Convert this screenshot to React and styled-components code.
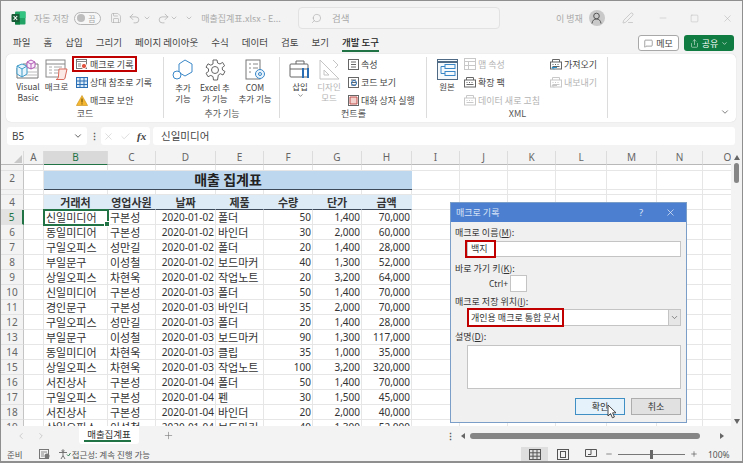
import React from 'react';
import styled, { createGlobalStyle } from 'styled-components';
import {
  Search, Undo2, Redo2, Save, PenLine, Minus, Square, X, MessageSquare, ChevronDown,
  ChevronLeft, ChevronRight, Plus, Check, Share,
} from 'lucide-react';

const KR = `"Noto Sans CJK KR", "Noto Sans", sans-serif`;
const LATIN = `"Noto Sans", "Noto Sans CJK KR", sans-serif`;

const GlobalStyle = createGlobalStyle`
  html, body { margin: 0; padding: 0; height: 100%; overflow: hidden; background: #f3f3f3; }
  #root { height: 100%; }
  * { box-sizing: border-box; }
`;

const Window = styled.div`
  width: 743px;
  height: 463px;
  position: relative;
  display: flex;
  flex-direction: column;
  background: #f3f3f3;
  border: 1px solid #8f8f8f;
  border-bottom-width: 2px;
  font-family: ${KR};
  color: #333;
  overflow: hidden;
`;

/* title bar */
const TitleBar = styled.div`
  height: 34px;
  display: flex;
  align-items: center;
  padding: 0 0 0 10px;
  color: #a9a9a9;
  font-size: 9px;
  flex: none;
`;
const Faint = styled.span`
  margin-left: ${(p) => p.$ml || 0}px;
  display: inline-flex;
  align-items: center;
  color: ${(p) => p.$color || '#aaa'};
  white-space: nowrap;
`;
const Toggle = styled.div`
  margin-left: 5px;
  width: 27px;
  height: 13px;
  border: 1px solid #b5b5b5;
  border-radius: 7px;
  display: flex;
  align-items: center;
  padding-left: 2px;
  gap: 3px;
  font-size: 8px;
  background: #f7f7f7;
  &::before {
    content: '';
    width: 8px;
    height: 8px;
    border-radius: 50%;
    background: #bdbdbd;
  }
`;
const SearchBox = styled.div`
  position: absolute;
  left: 297px;
  top: 6px;
  width: 202px;
  height: 22px;
  border: 1px solid #e2e2e2;
  border-radius: 4px;
  background: #f5f5f5;
  display: flex;
  align-items: center;
  padding-left: 12px;
  gap: 10px;
  font-size: 9.5px;
`;
const TitleRight = styled.div`
  margin-left: auto;
  display: flex;
  align-items: center;
  width: 186px;
`;
const Avatar = styled.div`
  width: 16px;
  height: 16px;
  border-radius: 50%;
  background: #c9c9c9;
  margin-left: 6px;
  display: flex;
  align-items: center;
  justify-content: center;
`;

/* tabs */
const TabRow = styled.div`
  height: 19px;
  flex: none;
  display: flex;
  align-items: flex-start;
  padding-left: 12px;
  gap: 13px;
  font-size: 9.5px;
  position: relative;
`;
const Tab = styled.div`
  height: 17px;
  line-height: 14px;
  color: ${(p) => (p.$active ? '#222' : '#444')};
  font-weight: ${(p) => (p.$active ? 500 : 400)};
  border-bottom: ${(p) => (p.$active ? '2px solid #217346' : '2px solid transparent')};
  white-space: nowrap;
`;
const TabActions = styled.div`
  position: absolute;
  right: 8px;
  top: 0;
  display: flex;
  gap: 5px;
`;
const MemoButton = styled.div`
  width: 41px;
  height: 16px;
  border: 1px solid #a8a8a8;
  border-radius: 3px;
  background: #fff;
  display: flex;
  align-items: center;
  justify-content: center;
  gap: 3px;
  font-size: 9px;
  color: #444;
`;
const ShareButton = styled.div`
  width: 50px;
  height: 16px;
  background: #107c41;
  border-radius: 3px;
  color: #fff;
  display: flex;
  align-items: center;
  justify-content: center;
  gap: 3px;
  font-size: 9px;
`;

/* ribbon */
const Ribbon = styled.div`
  flex: none;
  height: 68px;
  margin: 0 6px 0 5px;
  background: #fff;
  border-radius: 5px;
  box-shadow: 0 0 1px rgba(0, 0, 0, 0.2);
  display: flex;
  position: relative;
`;
const Group = styled.div`
  width: ${(p) => p.$w}px;
  display: flex;
  flex-direction: column;
  position: relative;
  &::after {
    content: '';
    position: absolute;
    right: 0;
    top: 3px;
    bottom: 4px;
    width: 1px;
    background: #dcdcdc;
  }
`;
const GroupBody = styled.div`
  flex: 1;
  min-height: 0;
  display: flex;
  align-items: flex-start;
  padding-left: ${(p) => p.$pl || 0}px;
`;
const GroupLabel = styled.div`
  flex: none;
  height: 15px;
  text-align: center;
  font-size: 9px;
  line-height: 14px;
  color: #555;
`;
const BigButton = styled.div`
  width: ${(p) => p.$w || 30}px;
  margin-left: ${(p) => p.$ml || 0}px;
  display: flex;
  flex-direction: column;
  align-items: center;
  padding-top: 5px;
  font-size: 8.5px;
  line-height: 11px;
  text-align: center;
  white-space: nowrap;
  color: ${(p) => (p.$off ? '#b4b4b4' : '#444')};
  svg { margin-bottom: 1px; flex: none; }
`;
const SmallColumn = styled.div`
  display: flex;
  flex-direction: column;
  align-items: flex-start;
  gap: 2px;
  padding-top: 2px;
  margin-left: ${(p) => p.$ml || 0}px;
  width: ${(p) => p.$w || 'auto'};
`;
const SmallButton = styled.div`
  height: 16px;
  display: flex;
  align-items: center;
  gap: 2px;
  padding: 0 2px 0 2px;
  font-size: 9px;
  white-space: nowrap;
  color: ${(p) => (p.$off ? '#b4b4b4' : '#444')};
  border: ${(p) => (p.$marked ? '2px solid #c00000' : '2px solid transparent')};
  svg { flex: none; }
`;
const CollapseRibbon = styled.div`
  position: absolute;
  right: 6px;
  bottom: 5px;
  color: #666;
  display: flex;
`;

/* formula bar */
const FormulaBar = styled.div`
  flex: none;
  height: 29px;
  display: flex;
  align-items: flex-start;
  padding: 5px 7px 0 6px;
  font-size: 10.5px;
`;
const NameBox = styled.div`
  width: 80px;
  height: 18px;
  background: #fff;
  border-radius: 3px;
  display: flex;
  align-items: center;
  justify-content: space-between;
  padding: 0 4px 0 5px;
  color: #444;
  font-family: ${LATIN};
  font-size: 10px;
`;
const Dots = styled.div`
  width: 14px;
  height: 18px;
  display: flex;
  align-items: center;
  justify-content: center;
  color: #555;
  font-weight: 700;
  font-size: 9px;
`;
const FxBox = styled.div`
  width: 49px;
  height: 18px;
  background: #fff;
  border-radius: 3px;
  display: flex;
  align-items: center;
  gap: 6px;
  padding-left: 2px;
  color: #c4c4c4;
`;
const FxMark = styled.span`
  font-family: "Liberation Serif", serif;
  font-style: italic;
  font-weight: 700;
  font-size: 11px;
  color: #444;
`;
const FormulaInput = styled.div`
  flex: 1;
  height: 18px;
  margin-left: 3px;
  padding-left: 8px;
  background: #fff;
  border-radius: 3px;
  line-height: 17px;
  color: #444;
`;

/* sheet */
const SheetArea = styled.div`
  flex: none;
  height: 275px;
  display: flex;
  background: #fff;
  overflow: hidden;
`;
const Sheet = styled.div`
  width: 730px;
  overflow: hidden;
  display: grid;
  grid-template-columns: 23px 20px 64px 48px 60px 48px 49px 49px 50px 48px 48px 48px 51px 50px 46px 50px;
  grid-template-rows: 14px 6px 19px 5px 15px repeat(15, 15px);
  grid-auto-rows: 15px;
  align-content: start;
`;
const ColHead = styled.div`
  background: ${(p) => (p.$sel ? '#d9d9d9' : '#f3f3f3')};
  color: ${(p) => (p.$sel ? '#217346' : '#666')};
  border-right: 1px solid #dcdcdc;
  border-bottom: ${(p) => (p.$sel ? '1px solid #217346' : '1px solid #b8b8b8')};
  text-align: center;
  font-family: ${LATIN};
  font-size: 10px;
  line-height: 13px;
`;
const Corner = styled(ColHead)`
  position: relative;
  &::after {
    content: '';
    position: absolute;
    right: 1px;
    bottom: 1px;
    border: 4px solid transparent;
    border-right-color: #c8c8c8;
    border-bottom-color: #c8c8c8;
  }
`;
const RowHead = styled.div`
  background: ${(p) => (p.$sel ? '#e2e2e2' : '#f3f3f3')};
  color: ${(p) => (p.$sel ? '#217346' : '#666')};
  border-right: ${(p) => (p.$sel ? '2px solid #217346' : '1px solid #c4c4c4')};
  border-bottom: 1px solid #e2e2e2;
  text-align: center;
  font-family: ${LATIN};
  font-size: 10px;
  line-height: 14px;
  overflow: hidden;
`;
const Cell = styled.div`
  position: relative;
  padding: ${(p) => (p.$align === 'right' ? '0 1px 0 2px' : '0 2px')};
  border-right: 1px solid ${(p) => p.$line || '#e6e6e6'};
  border-bottom: 1px solid ${(p) => p.$under || '#e6e6e6'};
  background: ${(p) => p.$fill || '#fff'};
  font-family: ${(p) => (p.$latin ? LATIN : KR)};
  font-size: ${(p) => (p.$latin ? '10px' : '11px')};
  font-weight: ${(p) => (p.$bold ? 700 : 400)};
  text-align: ${(p) => p.$align || 'left'};
  line-height: 14px;
  color: #333;
  white-space: nowrap;
  overflow: hidden;
`;
const SelectedCell = styled(Cell)`
  overflow: visible;
  outline: 2px solid #217346;
  outline-offset: -1px;
  z-index: 1;
  &::after {
    content: '';
    position: absolute;
    right: -3px;
    bottom: -3px;
    width: 4px;
    height: 4px;
    background: #217346;
    border: 1px solid #fff;
  }
`;
const TitleCell = styled.div`
  grid-column: 3 / span 7;
  background: #bdd7ee;
  border-bottom: 1px solid #3d4a5a;
  text-align: center;
  font-weight: 700;
  font-size: 14px;
  line-height: 17px;
  color: #222;
`;
const VScroll = styled.div`
  flex: 1;
  background: #f3f3f3;
  display: flex;
  flex-direction: column;
  align-items: center;
  padding-top: 4px;
  position: relative;
  &::before {
    content: '';
    border: 3px solid transparent;
    border-top: 0;
    border-bottom: 5px solid #666;
  }
`;
const VThumb = styled.div`
  width: 5px;
  height: 20px;
  border-radius: 3px;
  background: #868686;
  margin-top: 3px;
`;
const VDown = styled.div`
  margin-top: auto;
  margin-bottom: 2px;
  border: 3px solid transparent;
  border-bottom: 0;
  border-top: 5px solid #666;
`;

/* sheet tabs */
const SheetTabs = styled.div`
  flex: none;
  height: 21px;
  display: flex;
  align-items: flex-start;
  color: #b0b0b0;
`;
const TabNav = styled.div`
  width: 78px;
  height: 19px;
  display: flex;
  align-items: center;
  gap: 10px;
  padding-left: 15px;
`;
const SheetTab = styled.div`
  width: 60px;
  height: 18px;
  background: #fff;
  border-radius: 0 0 3px 3px;
  text-align: center;
  font-size: 9.5px;
  line-height: 17px;
  color: #333;
  position: relative;
  &::after {
    content: '';
    position: absolute;
    left: 5px;
    right: 8px;
    bottom: 2px;
    height: 2px;
    background: #217346;
  }
`;
const AddSheet = styled.div`
  margin-left: 24px;
  height: 19px;
  display: flex;
  align-items: center;
  color: #777;
`;
const HScroll = styled.div`
  margin-left: auto;
  width: 296px;
  height: 20px;
  display: flex;
  align-items: center;
  padding-right: 18px;
  color: #666;
`;
const Kebab = styled.span`
  width: 15px;
  font-weight: 700;
  font-size: 9px;
  color: #555;
`;
const HArrow = styled.span`
  border: 3px solid transparent;
  border-left: ${(p) => (p.$dir === 'r' ? '4px solid #666' : 0)};
  border-right: ${(p) => (p.$dir === 'l' ? '4px solid #666' : 0)};
`;
const HThumb = styled.div`
  flex: 1;
  height: 6px;
  border-radius: 3px;
  background: #868686;
  margin: 0 20px 0 5px;
`;

/* status bar */
const StatusBar = styled.div`
  flex: 1;
  display: flex;
  align-items: center;
  padding-left: 6px;
  font-size: 8.5px;
  color: #555;
`;
const StatusRight = styled.div`
  margin-left: auto;
  display: flex;
  align-items: center;
  height: 100%;
  color: #555;
`;
const ViewButton = styled.div`
  width: 27px;
  height: 100%;
  display: flex;
  align-items: center;
  justify-content: center;
  margin-right: 1px;
  background: ${(p) => (p.$on ? '#dedede' : 'transparent')};
`;
const Zoomer = styled.div`
  width: 67px;
  height: 1px;
  background: #777;
  margin: 0 5px;
  position: relative;
  &::after {
    content: '';
    position: absolute;
    left: 32px;
    top: -4px;
    width: 3px;
    height: 9px;
    background: #666;
  }
`;
const ZoomValue = styled.span`
  width: 34px;
  margin-left: 10px;
  font-family: ${LATIN};
  font-size: 8.5px;
`;

/* macro dialog */
const Dialog = styled.div`
  position: absolute;
  left: 449px;
  top: 201px;
  width: 237px;
  height: 221px;
  background: #f0f0f0;
  border: 1px solid #7b9ec9;
  z-index: 5;
  display: flex;
  flex-direction: column;
  font-size: 9px;
  color: #333;
`;
const DialogTitle = styled.div`
  height: 19px;
  flex: none;
  background: #4d7fd0;
  color: #d9e5f6;
  display: flex;
  align-items: center;
  padding: 0 10px 0 5px;
  font-size: 9px;
`;
const HelpMark = styled.span`
  margin-left: auto;
  margin-right: 22px;
  font-family: ${LATIN};
  font-size: 9.5px;
`;
const DialogBody = styled.div`
  flex: 1;
  display: flex;
  flex-direction: column;
  padding: 4px 5px 0 4px;
`;
const FieldLabel = styled.div`
  flex: none;
  height: 13px;
  line-height: 13px;
  white-space: nowrap;
  u { text-underline-offset: 1px; }
`;
const Field = styled.div`
  flex: none;
  position: relative;
  margin: ${(p) => p.$mt}px 0 ${(p) => p.$mb}px 12px;
  width: 214px;
  height: ${(p) => p.$h}px;
  background: #fff;
  border: 1px solid #c4c4c4;
  padding-left: 3px;
  line-height: 14px;
  font-size: 9px;
  display: flex;
  align-items: center;
`;
const RedMark = styled.div`
  position: absolute;
  left: ${(p) => p.$left}px;
  top: -2px;
  bottom: -2px;
  width: ${(p) => p.$w}px;
  border: 2px solid #c00000;
  pointer-events: none;
`;
const ComboArrow = styled.div`
  position: absolute;
  right: 0;
  top: 0;
  bottom: 0;
  width: 12px;
  background: #e6e6e6;
  border-left: 1px solid #c4c4c4;
  display: flex;
  align-items: center;
  justify-content: center;
  color: #666;
`;
const HotkeyRow = styled.div`
  flex: none;
  display: flex;
  align-items: center;
  height: 17px;
  margin: 0 0 3px 34px;
  gap: 2px;
`;
const HotkeyBox = styled.div`
  width: 17px;
  height: 17px;
  background: #fff;
  border: 1px solid #c4c4c4;
`;
const CtrlLabel = styled.span`
  font-family: ${LATIN};
  font-size: 8.5px;
`;
const DialogButtons = styled.div`
  display: flex;
  justify-content: flex-end;
  gap: 6px;
`;
const DialogButton = styled.div`
  position: relative;
  width: 50px;
  height: 17px;
  background: ${(p) => (p.$primary ? '#e5f1fb' : '#e1e1e1')};
  border: 1px solid ${(p) => (p.$primary ? '#3f8fc4' : '#adadad')};
  text-align: center;
  line-height: 15px;
  font-size: 9px;
`;
const Cursor = styled.svg`
  position: absolute;
  left: 31px;
  top: 5px;
  z-index: 6;
`;

const Excel = () => (
  <svg width="15" height="14" viewBox="0 0 15 14">
    <rect x="4" y="0.5" width="10.5" height="13" rx="1" fill="#21a366" />
    <rect x="9" y="0.5" width="5.5" height="6.5" fill="#33c481" />
    <rect x="4" y="7" width="5" height="6.5" fill="#107c41" />
    <rect x="0.5" y="3" width="8" height="8" rx="1" fill="#185c37" />
    <path d="M2.6 5l3.6 4M6.2 5L2.6 9" stroke="#fff" strokeWidth="1.1" />
  </svg>
);

const VbaIcon = () => (
  <svg width="24" height="21" viewBox="0 0 24 21" fill="none">
    <path d="M7 5h15v14H1V9" stroke="#777" />
    <path d="M7 9h15M7 13h15M7 16h15" stroke="#bbb" />
    <path d="M1 7l5-2 5 2v8l-5 3-5-3z" stroke="#3d9bc9" fill="#e8f4fb" />
    <path d="M1 7l5 3 5-3M6 10v8" stroke="#3d9bc9" />
    <path d="M11 3l4-2 4 2v5l-4 2-4-2z" stroke="#b05ab5" fill="#fbeefb" />
    <path d="M11 3l4 2 4-2M15 5v5" stroke="#b05ab5" />
  </svg>
);
const MacroIcon = () => (
  <svg width="24" height="21" viewBox="0 0 24 21" fill="none">
    <rect x="1" y="1" width="19" height="17" stroke="#888" fill="#fff" />
    <path d="M1 5h19" stroke="#888" />
    <path d="M4 8h3M9 8h8M4 11h3M9 11h8M4 14h3M9 14h4" stroke="#aaa" />
    <path d="M14 10h8l-2 9c-.3 1.5-1.4 1.8-3 1.5h-6c1.4-.4 2.2-1.2 2.4-2.5z" fill="#fbe9e6" stroke="#d9695a" />
  </svg>
);
const RecordIcon = () => (
  <svg width="12" height="11" viewBox="0 0 12 11" fill="none">
    <rect x="0.5" y="0.5" width="10" height="9" stroke="#777" fill="#fff" />
    <path d="M.5 2.5h10M2 5h3M2 7h3" stroke="#888" />
    <circle cx="8" cy="7" r="2.6" fill="#e0533f" stroke="#fff" />
  </svg>
);
const GridIcon = () => (
  <svg width="12" height="11" viewBox="0 0 12 11" fill="none">
    <rect x="0.5" y="0.5" width="11" height="10" stroke="#2a6fb5" fill="#dcebf8" />
    <path d="M4 .5v10M8 .5v10M.5 4h11M.5 7.5h11" stroke="#2a6fb5" />
  </svg>
);
const WarnIcon = () => (
  <svg width="12" height="11" viewBox="0 0 12 11">
    <path d="M6 .5l5.6 10H.4z" fill="#f5b731" stroke="#c98f10" strokeWidth=".6" />
    <path d="M6 3.5v4M6 8.4v1" stroke="#5a4206" strokeWidth="1" />
  </svg>
);
const HexIcon = () => (
  <svg width="22" height="22" viewBox="0 0 22 22" fill="none" stroke="#3a87c8" strokeWidth="1">
    <path d="M13 1l7 4v8l-7 4-6-3.5V5z" />
    <circle cx="5" cy="16" r="4" fill="#fff" />
  </svg>
);
const GearIcon = () => (
  <svg width="22" height="22" viewBox="0 0 22 22" fill="none" stroke="#666" strokeWidth="1">
    <path d="M9 1h4l.6 3 2.4 1 2.6-1.600 2 3.400L18.200 8.600l.3 2.400 2.500 1.500-2 3.500-2.700-1.300-2 1.400L13.500 21h-4L9 17.600l-2.200-1.200-2.800 1.300-2-3.500 2.500-1.700V9.800L2 8.200l2-3.400 2.800 1.400L9 5z" />
    <circle cx="11" cy="11" r="3.500" />
  </svg>
);
const ComIcon = () => (
  <svg width="22" height="22" viewBox="0 0 22 22" fill="none">
    <rect x="2" y="1" width="14" height="19" stroke="#777" fill="#fff" />
    <path d="M5 5h2M9 5h5M5 9h2M9 9h5M5 13h2" stroke="#888" />
    <circle cx="16" cy="15" r="4.500" stroke="#3a87c8" fill="#e8f3fb" />
    <circle cx="16" cy="15" r="1.500" stroke="#3a87c8" />
  </svg>
);
const ToolboxIcon = () => (
  <svg width="22" height="21" viewBox="0 0 22 21" fill="none">
    <path d="M7 5V2h8v3" stroke="#666" />
    <rect x="1" y="5" width="18" height="13" rx="1" stroke="#666" fill="#fff" />
    <path d="M1 10h18" stroke="#666" />
    <path d="M14 9v10M19 9v10" stroke="#2a6fb5" strokeWidth="2" />
  </svg>
);
const RulerIcon = () => (
  <svg width="21" height="21" viewBox="0 0 21 21" fill="none" stroke="#c4c4c4">
    <path d="M1 1l19 19H1z" />
    <path d="M5 11l5 5H5z" />
    <path d="M14 1l5 5-3 3" />
  </svg>
);
const SmallSheetIcon = ({ color = '#666', accent = '#666', variant }) => (
  <svg width="11" height="11" viewBox="0 0 11 11" fill="none">
    <rect x="0.5" y="0.5" width="10" height="10" stroke={color} fill="#fff" />
    <path d="M3 3h5M3 5.500h5M3 8h5" stroke={color} />
    {variant === 'lens' && <circle cx="6" cy="6" r="2.500" stroke={accent} />}
    {variant === 'red' && <path d="M2 2h7v7H2z" fill="#f3d1cc" stroke={accent} />}
  </svg>
);
const SourceIcon = () => (
  <svg width="21" height="21" viewBox="0 0 21 21" fill="none">
    <rect x="0.5" y="0.5" width="20" height="20" stroke="#4e6a85" fill="#f5f9fc" />
    <path d="M.5 3h20" stroke="#4e6a85" strokeWidth="2" />
    <rect x="8" y="5.500" width="10" height="4" stroke="#3a87c8" />
    <rect x="8" y="12.500" width="10" height="4" stroke="#3a87c8" />
    <path d="M4 7.500h4M4 7.500v7h4" stroke="#3a87c8" />
  </svg>
);
const PackIcon = ({ off, arrow }) => {
  const c = off ? '#c8c8c8' : '#666';
  return (
    <svg width="12" height="12" viewBox="0 0 12 12" fill="none">
      <path d="M2.500 4V1.500h7V4" stroke={c} />
      <rect x="0.500" y="4" width="11" height="7" stroke={c} fill="#fff" />
      <path d="M2.500 6.500h1M5 6.500h1M7.500 6.500h1M2.500 8.500h7" stroke={c} />
      {arrow && <path d="M2 9.500l2 2M2 9.500h5" stroke={off ? c : '#2a8fcb'} />}
    </svg>
  );
};
const MapIcon = ({ off }) => (
  <svg width="12" height="12" viewBox="0 0 12 12" fill="none" stroke={off ? '#c8c8c8' : '#666'}>
    <rect x="0.500" y="0.500" width="11" height="11" />
    <path d="M.5 3.500h11M4.500 3.500v8M.5 7.500h11" />
  </svg>
);

const A11y = () => (
  <svg width="13" height="11" viewBox="0 0 13 11" fill="none" stroke="#666" strokeWidth=".9">
    <circle cx="5" cy="1.800" r="1" />
    <path d="M1 3.500h8M5 3.500v3M5 6.500L3 10M5 6.500L7 10" />
    <path d="M9 5.500l1.500 1.500 2-3" stroke="#217346" />
  </svg>
);
const MacroStatus = () => (
  <svg width="12" height="11" viewBox="0 0 12 11" fill="none">
    <rect x="0.500" y="0.500" width="9" height="9" stroke="#777" fill="#f3f3f3" />
    <path d="M2 3h6M2 5h3M2 7h3" stroke="#888" />
    <circle cx="8" cy="7" r="2.500" fill="#777" />
  </svg>
);
const NormalView = () => (
  <svg width="12" height="11" viewBox="0 0 12 11" fill="none" stroke="#555">
    <rect x="0.500" y="0.500" width="11" height="10" />
    <path d="M4 .5v10M8 .5v10M.5 3.800h11M.5 7.200h11" />
  </svg>
);
const LayoutView = () => (
  <svg width="12" height="11" viewBox="0 0 12 11" fill="none" stroke="#555">
    <rect x="0.500" y="0.500" width="11" height="10" />
    <rect x="3.500" y="2.500" width="5" height="6" />
  </svg>
);
const BreakView = () => (
  <svg width="12" height="11" viewBox="0 0 12 11" fill="none" stroke="#555">
    <path d="M.5 7.500v-7h11v7M.5 7.500h11M6 .5v5h-3" />
  </svg>
);

const RIBBON_TABS = ['파일', '홈', '삽입', '그리기', '페이지 레이아웃', '수식', '데이터', '검토', '보기'];
const COLUMNS = ['A', 'B', 'C', 'D', 'E', 'F', 'G', 'H', 'I', 'J', 'K', 'L', 'M', 'N', 'O'];
const HEADERS = ['거래처', '영업사원', '날짜', '제품', '수량', '단가', '금액'];
const ROWS = [
  ['신일미디어', '구본성', '2020-01-02', '폴더', 50, '1,400', '70,000'],
  ['동일미디어', '구본성', '2020-01-02', '바인더', 30, '2,000', '60,000'],
  ['구일오피스', '성만길', '2020-01-02', '폴더', 20, '1,400', '28,000'],
  ['부일문구', '이성철', '2020-01-02', '보드마커', 40, '1,300', '52,000'],
  ['상일오피스', '차현욱', '2020-01-02', '작업노트', 20, '3,200', '64,000'],
  ['신일미디어', '구본성', '2020-01-03', '폴더', 50, '1,400', '70,000'],
  ['경인문구', '구본성', '2020-01-03', '바인더', 35, '2,000', '70,000'],
  ['구일오피스', '성만길', '2020-01-03', '폴더', 20, '1,400', '28,000'],
  ['부일문구', '이성철', '2020-01-03', '보드마커', 90, '1,300', '117,000'],
  ['동일미디어', '차현욱', '2020-01-03', '클립', 35, '1,000', '35,000'],
  ['상일오피스', '차현욱', '2020-01-03', '작업노트', 100, '3,200', '320,000'],
  ['서진상사', '구본성', '2020-01-04', '폴더', 50, '1,400', '70,000'],
  ['구일오피스', '구본성', '2020-01-04', '펜', 30, '1,500', '45,000'],
  ['서진상사', '구본성', '2020-01-04', '바인더', 20, '2,000', '40,000'],
  ['상일오피스', '이성철', '2020-01-04', '보드마커', 40, '1,300', '52,000'],
];

const EmptyCells = ({ count, under }) =>
  Array.from({ length: count }, (_, i) => <Cell key={i} $under={under} />);

const DataRow = ({ num, row, selected }) => (
  <>
    <RowHead $sel={selected}>{num}</RowHead>
    <Cell />
    {row.map((value, i) => {
      const latin = i === 2 || i > 3;
      const align = i === 2 || i > 3 ? 'right' : 'left';
      const Comp = selected && i === 0 ? SelectedCell : Cell;
      return <Comp key={i} $latin={latin} $align={align}>{value}</Comp>;
    })}
    <EmptyCells count={7} />
  </>
);

const MacroDialog = () => (
  <Dialog>
    <DialogTitle>
      매크로 기록
      <HelpMark>?</HelpMark>
      <X size={11} strokeWidth={1.5} color="#e8eff9" />
    </DialogTitle>
    <DialogBody>
      <FieldLabel>매크로 이름(<u>M</u>):</FieldLabel>
      <Field $h={16} $mt={2} $mb={5}>
        백지
        <RedMark $left={-3} $w={31} />
      </Field>
      <FieldLabel>바로 가기 키(<u>K</u>):</FieldLabel>
      <HotkeyRow>
        <CtrlLabel>Ctrl+</CtrlLabel>
        <HotkeyBox />
      </HotkeyRow>
      <FieldLabel>매크로 저장 위치(<u>I</u>):</FieldLabel>
      <Field $h={17} $mt={1} $mb={4}>
        개인용 매크로 통합 문서
        <RedMark $left={-1} $w={97} />
        <ComboArrow><ChevronDown size={9} /></ComboArrow>
      </Field>
      <FieldLabel>설명(<u>D</u>):</FieldLabel>
      <Field $h={44} $mt={2} $mb={9} />
      <DialogButtons>
        <DialogButton $primary>
          확인
          <Cursor width="11" height="15" viewBox="0 0 11 15">
            <path d="M1 1v11l2.600-2.400 1.800 4.200 2-.8-1.800-4.200H9z" fill="#fff" stroke="#333" strokeWidth=".9" />
          </Cursor>
        </DialogButton>
        <DialogButton>취소</DialogButton>
      </DialogButtons>
    </DialogBody>
  </Dialog>
);

const App = () => (
  <Window>
    <GlobalStyle />
    <TitleBar>
      <Excel />
      <Faint $ml={8}>자동 저장</Faint>
      <Toggle>끔</Toggle>
      <Faint $ml={9}><Save size={12} strokeWidth={1.2} /></Faint>
      <Faint $ml={6}><Undo2 size={13} strokeWidth={1.3} /></Faint>
      <Faint $ml={2}><ChevronDown size={8} /></Faint>
      <Faint $ml={6}><Redo2 size={13} strokeWidth={1.3} /></Faint>
      <Faint><ChevronDown size={8} /></Faint>
      <Faint $ml={7}><ChevronDown size={8} /></Faint>
      <Faint $ml={8}>매출집계표.xlsx - E...</Faint>
      <SearchBox>
        <Search size={11} strokeWidth={1.3} style={{ transform: 'scaleX(-1)' }} />
        검색
      </SearchBox>
      <TitleRight>
        <Faint>이 병재</Faint>
        <Avatar>
          <svg width="11" height="12" viewBox="0 0 11 12" fill="none" stroke="#555">
            <circle cx="5.500" cy="4" r="2.800" />
            <path d="M1 11.500c.4-3 2-4.500 4.500-4.500s4.100 1.500 4.500 4.500" />
          </svg>
        </Avatar>
        <Faint $ml={17}><PenLine size={12} strokeWidth={1.1} /></Faint>
        <Faint $ml={24}><Minus size={10} strokeWidth={1} /></Faint>
        <Faint $ml={22}><Square size={9} strokeWidth={1} /></Faint>
        <Faint $ml={23}><X size={11} strokeWidth={1} /></Faint>
      </TitleRight>
    </TitleBar>

    <TabRow>
      {RIBBON_TABS.map((t) => <Tab key={t}>{t}</Tab>)}
      <Tab $active>개발 도구</Tab>
      <TabActions>
        <MemoButton><MessageSquare size={9} strokeWidth={1.3} />메모</MemoButton>
        <ShareButton>
          <Share size={9} strokeWidth={1.3} />공유
          <ChevronDown size={7} strokeWidth={2} />
        </ShareButton>
      </TabActions>
    </TabRow>

    <Ribbon>
      <Group $w={158}>
        <GroupBody $pl={9}>
          <BigButton $w={26}><VbaIcon />Visual<br />Basic</BigButton>
          <BigButton $w={31}><MacroIcon />매크로</BigButton>
          <SmallColumn>
            <SmallButton $marked><RecordIcon />매크로 기록</SmallButton>
            <SmallButton><GridIcon />상대 참조로 기록</SmallButton>
            <SmallButton><WarnIcon />매크로 보안</SmallButton>
          </SmallColumn>
        </GroupBody>
        <GroupLabel>코드</GroupLabel>
      </Group>
      <Group $w={116}>
        <GroupBody $pl={3}>
          <BigButton $w={32}><HexIcon />추가<br />기능</BigButton>
          <BigButton $w={30} $ml={1}><GearIcon />Excel 추<br />가 기능</BigButton>
          <BigButton $w={42} $ml={4}><ComIcon />COM<br />추가 기능</BigButton>
        </GroupBody>
        <GroupLabel>추가 기능</GroupLabel>
      </Group>
      <Group $w={147}>
        <GroupBody $pl={7}>
          <BigButton $w={26}>
            <ToolboxIcon />삽입<br /><ChevronDown size={7} strokeWidth={2} />
          </BigButton>
          <BigButton $w={32} $off><RulerIcon />디자인<br />모드</BigButton>
          <SmallColumn $ml={-1}>
            <SmallButton><SmallSheetIcon />속성</SmallButton>
            <SmallButton><SmallSheetIcon variant="lens" accent="#2a6fb5" />코드 보기</SmallButton>
            <SmallButton><SmallSheetIcon variant="red" accent="#c0504d" />대화 상자 실행</SmallButton>
          </SmallColumn>
        </GroupBody>
        <GroupLabel>컨트롤</GroupLabel>
      </Group>
      <Group $w={181}>
        <GroupBody $pl={7}>
          <BigButton $w={26}><SourceIcon />원본</BigButton>
          <SmallColumn $w="84px">
            <SmallButton $off><MapIcon off />맵 속성</SmallButton>
            <SmallButton><PackIcon />확장 팩</SmallButton>
            <SmallButton $off><PackIcon off />데이터 새로 고침</SmallButton>
          </SmallColumn>
          <SmallColumn $ml={2}>
            <SmallButton><PackIcon arrow />가져오기</SmallButton>
            <SmallButton $off><PackIcon off arrow />내보내기</SmallButton>
          </SmallColumn>
        </GroupBody>
        <GroupLabel>XML</GroupLabel>
      </Group>
      <CollapseRibbon><ChevronDown size={10} /></CollapseRibbon>
    </Ribbon>

    <FormulaBar>
      <NameBox>B5<ChevronDown size={10} /></NameBox>
      <Dots>⋮</Dots>
      <FxBox>
        <X size={11} strokeWidth={1.2} />
        <Check size={11} strokeWidth={1.2} />
        <FxMark>fx</FxMark>
      </FxBox>
      <FormulaInput>신일미디어</FormulaInput>
    </FormulaBar>

    <SheetArea>
      <Sheet>
        <Corner />
        {COLUMNS.map((c) => <ColHead key={c} $sel={c === 'B'}>{c}</ColHead>)}

        <RowHead />
        <EmptyCells count={15} />

        <RowHead>2</RowHead>
        <Cell />
        <TitleCell>매출 집계표</TitleCell>
        <EmptyCells count={7} />

        <RowHead />
        <EmptyCells count={15} />

        <RowHead>4</RowHead>
        <Cell />
        {HEADERS.map((h) => (
          <Cell key={h} $bold $fill="#ddebf7" $line="#ddebf7" $under="#3d4a5a" $align="center">{h}</Cell>
        ))}
        <EmptyCells count={7} />

        {ROWS.map((row, i) => (
          <DataRow key={i} num={i + 5} row={row} selected={i === 0} />
        ))}
      </Sheet>
      <VScroll>
        <VThumb />
        <VDown />
      </VScroll>
    </SheetArea>

    <SheetTabs>
      <TabNav>
        <ChevronLeft size={10} strokeWidth={1.4} />
        <ChevronRight size={10} strokeWidth={1.4} />
      </TabNav>
      <SheetTab>매출집계표</SheetTab>
      <AddSheet><Plus size={11} strokeWidth={1.3} /></AddSheet>
      <HScroll>
        <Kebab>⋮</Kebab>
        <HArrow $dir="l" />
        <HThumb />
        <HArrow $dir="r" />
      </HScroll>
    </SheetTabs>

    <StatusBar>
      준비
      <Faint $ml={16}><MacroStatus /></Faint>
      <Faint $ml={7} $color="#555"><A11y /></Faint>
      <Faint $ml={1} $color="#555">접근성: 계속 진행 가능</Faint>
      <StatusRight>
        <ViewButton $on><NormalView /></ViewButton>
        <ViewButton><LayoutView /></ViewButton>
        <ViewButton><BreakView /></ViewButton>
        <Minus size={8} />
        <Zoomer />
        <Plus size={8} />
        <ZoomValue>100%</ZoomValue>
      </StatusRight>
    </StatusBar>

    <MacroDialog />
  </Window>
);

export default App;
